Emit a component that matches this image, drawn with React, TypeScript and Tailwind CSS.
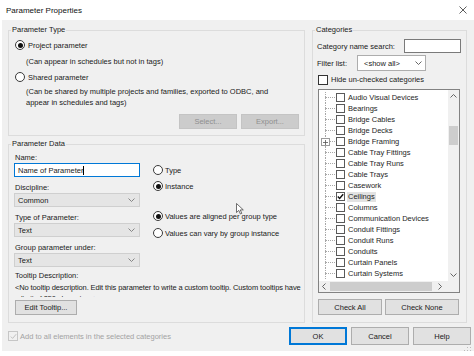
import React from "react";

function Radio({ checked }: { checked?: boolean }) {
  return (
    <span className="w-[10px] h-[10px] rounded-full border border-[#3a3a3a] bg-white flex items-center justify-center shrink-0">
      {checked && <span className="w-[5px] h-[5px] rounded-full bg-[#111]" />}
    </span>
  );
}

function Chevron({ color = "#7a7a7a" }: { color?: string }) {
  return (
    <svg width="7" height="4" viewBox="0 0 7 4">
      <polyline points="0.5,0.5 3.5,3.5 6.5,0.5" fill="none" stroke={color} strokeWidth="0.9" />
    </svg>
  );
}

function Group({ title, className, children }: { title: string; className: string; children?: React.ReactNode }) {
  return (
    <div className={`relative border border-[#dcdcdc] ${className}`}>
      <span className="absolute -top-[7px] left-[2px] px-[1px] bg-[#f0f0f0] leading-[11px]">{title}</span>
      {children}
    </div>
  );
}

function Btn({ children, className = "", disabled }: { children: React.ReactNode; className?: string; disabled?: boolean }) {
  return (
    <div
      className={`flex items-center justify-center border ${
        disabled ? "bg-[#cccccc] border-[#c4c4c4] text-[#8f8f8f]" : "bg-[#e1e1e1] border-[#adadad] text-[#1a1a1a]"
      } ${className}`}
    >
      {children}
    </div>
  );
}

function Combo({ value }: { value: string }) {
  return (
    <div className="-ml-[1px] w-[126px] h-[14px] bg-[#e5e5e5] border border-[#cfcfcf] flex items-center justify-between pl-[3px] pr-[4px]">
      <span>{value}</span>
      <Chevron />
    </div>
  );
}

const items = [
  "Audio Visual Devices",
  "Bearings",
  "Bridge Cables",
  "Bridge Decks",
  "Bridge Framing",
  "Cable Tray Fittings",
  "Cable Tray Runs",
  "Cable Trays",
  "Casework",
  "Ceilings",
  "Columns",
  "Communication Devices",
  "Conduit Fittings",
  "Conduit Runs",
  "Conduits",
  "Curtain Panels",
  "Curtain Systems",
];

function TreeItem({ name }: { name: string }) {
  const plus = name === "Bridge Framing";
  const checked = name === "Ceilings";
  return (
    <div className="flex items-center h-[11px] shrink-0">
      <span className="relative w-[17px] h-full shrink-0">
        <span className="absolute left-[6px] top-0 bottom-0 border-l border-dotted border-[#a8a8a8]" />
        <span className="absolute left-[6px] w-[10px] top-[5px] border-t border-dotted border-[#a8a8a8]" />
        {plus && (
          <span className="absolute left-[2px] top-[2px] w-[9px] h-[8px] bg-white border border-[#9a9a9a] flex items-center justify-center">
            <svg width="5" height="5" viewBox="0 0 5 5">
              <path d="M0 2.5H5M2.5 0V5" stroke="#555" strokeWidth="0.8" />
            </svg>
          </span>
        )}
      </span>
      <span className="w-[9px] h-[9px] border border-[#5a5a5a] bg-white shrink-0 flex items-center justify-center">
        {checked && (
          <svg width="7" height="7" viewBox="0 0 7 7">
            <path d="M0.8 3.6L2.6 5.4L6.2 1.2" fill="none" stroke="#111" strokeWidth="1.4" />
          </svg>
        )}
      </span>
      <span className={`ml-[2px] px-[1px] leading-[10px] whitespace-nowrap text-[#1e1e1e] ${checked ? "bg-[#e2e2e2]" : ""}`}>
        {name}
      </span>
    </div>
  );
}

export default function App() {
  return (
    <div className="relative w-[474px] h-[356px] bg-white overflow-hidden font-['Liberation_Sans',Arial,sans-serif] text-[7.5px] text-[#1a1a1a] leading-[11px]">
      {/* title bar */}
      <div className="h-[20px] flex items-center justify-between pl-[6px] pr-[7px]">
        <span className="text-[8px] text-[#111]">Parameter Properties</span>
        <svg width="8" height="8" viewBox="0 0 8 8">
          <path d="M0.5 0.5L7.5 7.5M7.5 0.5L0.5 7.5" stroke="#333" strokeWidth="0.8" />
        </svg>
      </div>

      {/* body */}
      <div className="ml-[2px] h-[331px] bg-[#f0f0f0] flex flex-col">
        <div className="flex pt-[10px] pl-[6px] gap-[7px]">
          {/* left column */}
          <div className="w-[297px] flex flex-col gap-[8px]">
            <Group title="Parameter Type" className="h-[106px]">
              <div className="flex flex-col pl-[6px] pr-[5px] pt-[8px]">
                <div className="h-[12px] flex items-center gap-[3px]">
                  <Radio checked />
                  <span>Project parameter</span>
                </div>
                <div className="h-[12px] mt-[4px] flex items-center pl-[11px]">(Can appear in schedules but not in tags)</div>
                <div className="h-[12px] mt-[4px] flex items-center gap-[3px]">
                  <Radio />
                  <span>Shared parameter</span>
                </div>
                <div className="mt-[3px] pl-[11px] leading-[11px] whitespace-nowrap">
                  <div>(Can be shared by multiple projects and families, exported to ODBC, and</div>
                  <div>appear in schedules and tags)</div>
                </div>
                <div className="mt-[6px] flex justify-end gap-[4px]">
                  <Btn disabled className="w-[58px] h-[15px]">Select...</Btn>
                  <Btn disabled className="w-[58px] h-[15px]">Export...</Btn>
                </div>
              </div>
            </Group>

            <Group title="Parameter Data" className="h-[179px]">
              <div className="flex pl-[6px]">
                <div className="w-[125px] flex flex-col">
                  <div className="h-[12px] mt-[6px] flex items-center">Name:</div>
                  <div className="-ml-[1px] w-[126px] h-[14px] bg-white border border-[#0078d7] flex items-center pl-[3px]">
                    <span>Name of Parameter</span>
                    <span className="w-[1px] h-[9px] bg-black" />
                  </div>
                  <div className="h-[12px] mt-[4px] flex items-center">Discipline:</div>
                  <Combo value="Common" />
                  <div className="h-[12px] mt-[4px] flex items-center">Type of Parameter:</div>
                  <Combo value="Text" />
                  <div className="h-[12px] mt-[4px] flex items-center">Group parameter under:</div>
                  <Combo value="Text" />
                  <div className="h-[12px] mt-[2px] flex items-center whitespace-nowrap">Tooltip Description:</div>
                  <div className="mt-[1px] h-[15px] w-[289px] overflow-hidden whitespace-nowrap leading-[11px] tracking-[-0.12px]">
                    <div>&lt;No tooltip description. Edit this parameter to write a custom tooltip. Custom tooltips have</div>
                    <div>a limit of 250 characters.&gt;</div>
                  </div>
                  <Btn className="mt-[3px] w-[62px] h-[15px]">Edit Tooltip...</Btn>
                </div>
                <div className="ml-[13px] flex flex-col">
                  <div className="h-[12px] mt-[19px] flex items-center gap-[2px]">
                    <Radio />
                    <span>Type</span>
                  </div>
                  <div className="h-[12px] mt-[4px] flex items-center gap-[2px]">
                    <Radio checked />
                    <span>Instance</span>
                  </div>
                  <div className="h-[12px] mt-[18px] flex items-center gap-[2px] whitespace-nowrap">
                    <Radio checked />
                    <span>Values are aligned per group type</span>
                  </div>
                  <div className="h-[12px] mt-[5px] flex items-center gap-[2px] whitespace-nowrap">
                    <Radio />
                    <span>Values can vary by group instance</span>
                  </div>
                </div>
              </div>
            </Group>
          </div>

          {/* right column */}
          <Group title="Categories" className="w-[155px] h-[293px]">
            <div className="flex flex-col pl-[4px] pr-[5px] pt-[8px]">
              <div className="h-[14px] flex items-center justify-between">
                <span>Category name search:</span>
                <span className="w-[57px] h-[14px] bg-white border border-[#7a7a7a]" />
              </div>
              <div className="mt-[2px] h-[16px] flex items-center">
                <span className="w-[40px]">Filter list:</span>
                <div className="w-[69px] h-[16px] bg-white border border-[#adadad] flex items-center justify-between pl-[6px] pr-[3px]">
                  <span>&lt;show all&gt;</span>
                  <Chevron color="#555" />
                </div>
              </div>
              <div className="mt-[3px] ml-[1px] h-[11px] flex items-center gap-[3px]">
                <span className="w-[10px] h-[10px] border border-[#333] bg-white" />
                <span>Hide un-checked categories</span>
              </div>
              <div className="mt-[4px] ml-[1px] w-[142px] h-[204px] border border-[#828282] bg-white flex flex-col">
                <div className="flex h-[191px]">
                  <div className="flex-1 overflow-hidden flex flex-col pt-[2px]">
                    {items.map((n) => (
                      <TreeItem key={n} name={n} />
                    ))}
                  </div>
                  <div className="w-[11px] bg-[#f0f0f0] flex flex-col items-center">
                    <div className="h-[12px] flex items-center justify-center">
                      <svg width="7" height="4" viewBox="0 0 7 4">
                        <polyline points="0.5,3.5 3.5,0.5 6.5,3.5" fill="none" stroke="#555" strokeWidth="0.9" />
                      </svg>
                    </div>
                    <div className="mt-[24px] w-[9px] h-[19px] bg-[#cdcdcd]" />
                    <div className="mt-auto h-[13px] flex items-center justify-center">
                      <Chevron color="#555" />
                    </div>
                  </div>
                </div>
                <div className="flex h-[11px] bg-[#f0f0f0]">
                  <div className="w-[10px] flex items-center justify-center">
                    <svg width="4" height="7" viewBox="0 0 4 7">
                      <polyline points="3.5,0.5 0.5,3.5 3.5,6.5" fill="none" stroke="#555" strokeWidth="0.9" />
                    </svg>
                  </div>
                  <div className="ml-[1px] w-[102px] my-[1px] bg-[#cdcdcd]" />
                  <div className="flex-1 flex items-center justify-center">
                    <svg width="4" height="7" viewBox="0 0 4 7">
                      <polyline points="0.5,0.5 3.5,3.5 0.5,6.5" fill="none" stroke="#555" strokeWidth="0.9" />
                    </svg>
                  </div>
                  <div className="w-[11px] bg-[#f0f0f0]" />
                </div>
              </div>
              <div className="mt-[6px] ml-[1px] flex gap-[3px]">
                <Btn className="w-[64px] h-[16px]">Check All</Btn>
                <Btn className="w-[74px] h-[16px]">Check None</Btn>
              </div>
            </div>
          </Group>
        </div>

        {/* bottom row */}
        <div className="mt-[4px] flex items-center pl-[6px] pr-[3px]">
          <span className="w-[10px] h-[10px] border border-[#c6c6c6] bg-[#f0f0f0] flex items-center justify-center">
            <svg width="7" height="7" viewBox="0 0 7 7">
              <path d="M0.8 3.6L2.6 5.4L6.2 1.2" fill="none" stroke="#c0c0c0" strokeWidth="1" />
            </svg>
          </span>
          <span className="ml-[2px] text-[#a3a3a3]">Add to all elements in the selected categories</span>
          <div className="ml-auto flex gap-[4px]">
            <Btn className="w-[58px] h-[18px] !border-[#0078d7] border-2">OK</Btn>
            <Btn className="w-[58px] h-[18px]">Cancel</Btn>
            <Btn className="w-[58px] h-[18px]">Help</Btn>
          </div>
        </div>
      </div>

      {/* mouse cursor */}
      <svg className="absolute left-[236px] top-[203px]" width="8" height="12" viewBox="0 0 8 12">
        <path d="M0.5 0.5V9.5L2.8 7.4L4.4 11L5.8 10.4L4.3 6.9H7.3Z" fill="white" stroke="#333" strokeWidth="0.7" />
      </svg>

      {/* resize grip */}
      <svg className="absolute left-[464px] top-[344px]" width="8" height="8" viewBox="0 0 8 8">
        <rect x="6" y="0" width="1" height="1" fill="#bbb" />
        <rect x="3" y="3" width="1" height="1" fill="#bbb" />
        <rect x="6" y="3" width="1" height="1" fill="#bbb" />
        <rect x="0" y="6" width="1" height="1" fill="#bbb" />
        <rect x="3" y="6" width="1" height="1" fill="#bbb" />
        <rect x="6" y="6" width="1" height="1" fill="#bbb" />
      </svg>
    </div>
  );
}
